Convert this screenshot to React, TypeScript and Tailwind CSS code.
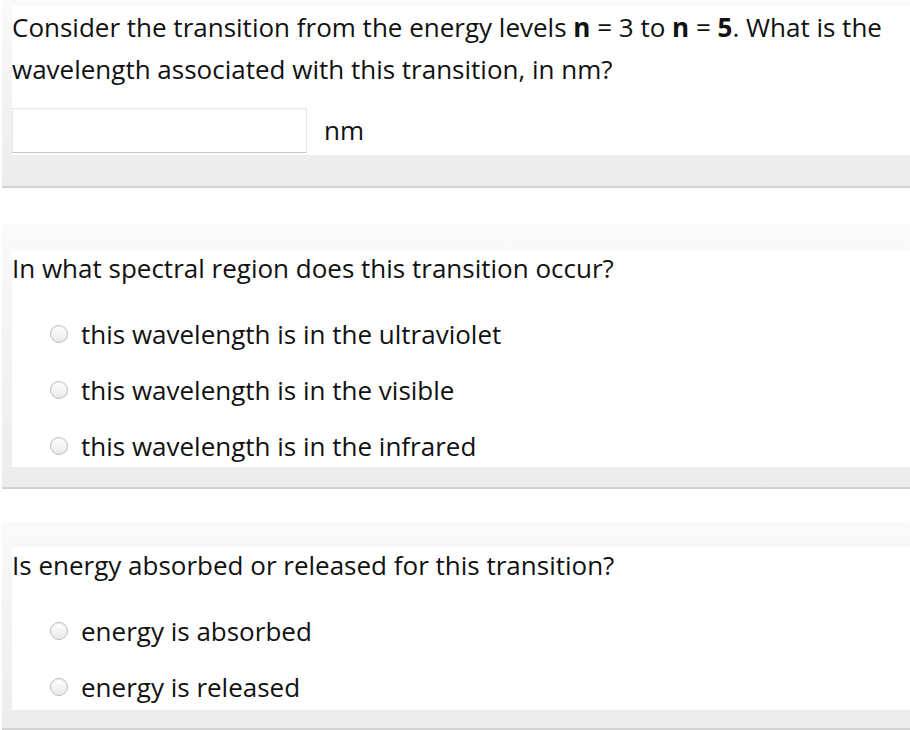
import React from 'react';

const REGION_OPTIONS = [
  'this wavelength is in the ultraviolet',
  'this wavelength is in the visible',
  'this wavelength is in the infrared',
];

const ENERGY_OPTIONS = ['energy is absorbed', 'energy is released'];

function Radio() {
  return (
    <span className="inline-block w-[18px] h-[18px] shrink-0 rounded-full border border-[#bdbdbd] bg-gradient-to-b from-white to-[#e9e9e9] shadow-[inset_0_1px_1px_rgba(0,0,0,0.05)]" />
  );
}

function OptionList({ options }: { options: string[] }) {
  return (
    <div className="flex flex-col gap-4 mt-7">
      {options.map((label) => (
        <label key={label} className="flex items-center h-10 pl-[38px] gap-[13px] text-[26px] text-[#111]">
          <Radio />
          <span>{label}</span>
        </label>
      ))}
    </div>
  );
}

function Panel({ first, children }: { first?: boolean; children: React.ReactNode }) {
  return (
    <div
      className={
        'ml-[2px] pl-[10px] border-b-2 border-[#d2d2d2] bg-gradient-to-b from-[#fafafa] to-[#ececec] ' +
        (first ? 'pt-[6px]' : 'pt-[26px]')
      }
    >
      {children}
    </div>
  );
}

export default function App() {
  return (
    <div className="w-[910px] h-[730px] bg-white overflow-hidden" style={{ fontFamily: '"Open Sans", sans-serif' }}>
      <Panel first>
        <div className="bg-white pb-[2px]">
          <p className="text-[26px] leading-[42px] text-[#111] pr-4">
            Consider the transition from the energy levels <b>n</b> = 3 to <b>n</b> = <b>5</b>. What is the
            wavelength associated with this transition, in nm?
          </p>
          <div className="flex items-center mt-[18px]">
            <input
              type="text"
              className="w-[295px] h-[45px] bg-white border border-[#e6e6e6] border-b-[#c6c6c6] outline-none px-2"
            />
            <span className="ml-[17px] text-[26px] text-[#111]">nm</span>
          </div>
        </div>
        <div className="h-[31px]" />
      </Panel>

      <div className="h-[36px]" />

      <Panel>
        <div className="bg-white pb-[1px]">
          <p className="text-[26px] leading-[36px] text-[#111]">
            In what spectral region does this transition occur?
          </p>
          <OptionList options={REGION_OPTIONS} />
        </div>
        <div className="h-[20px]" />
      </Panel>

      <div className="h-[32px]" />

      <Panel>
        <div className="bg-white pb-[3px]">
          <p className="text-[26px] leading-[36px] text-[#111]">
            Is energy absorbed or released for this transition?
          </p>
          <OptionList options={ENERGY_OPTIONS} />
        </div>
        <div className="h-[18px]" />
      </Panel>
    </div>
  );
}
